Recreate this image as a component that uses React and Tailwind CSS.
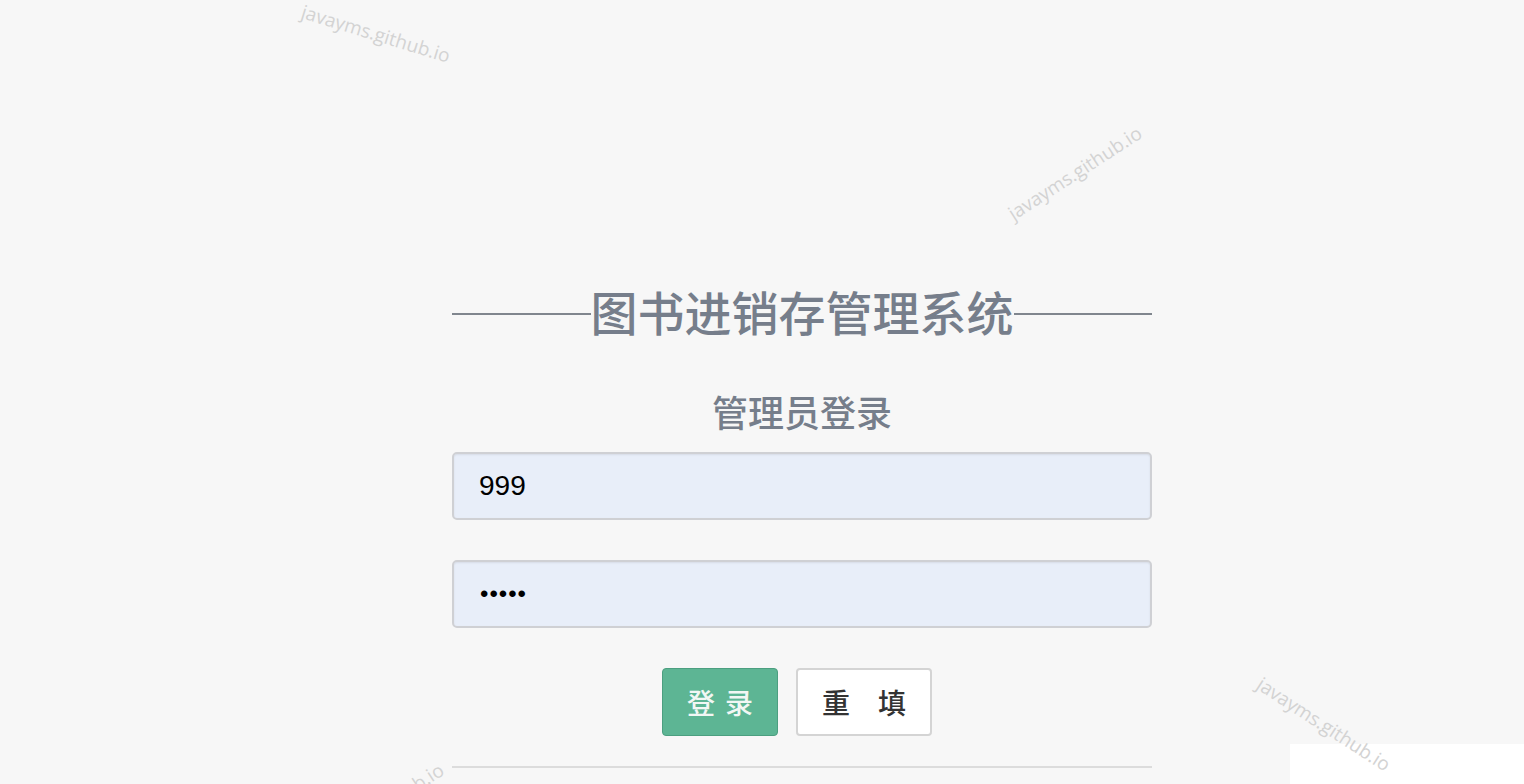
import React from "react";

const cjk = { fontFamily: '"Noto Sans CJK SC", "Noto Sans", sans-serif' };

function Watermark({ className }) {
  return (
    <div
      className={"absolute whitespace-nowrap text-[19px] leading-[18px] text-[#d3d3d3] select-none pointer-events-none " + className}
      style={{ fontFamily: '"Open Sans", "Noto Sans", sans-serif' }}
    >
      javayms.github.io
    </div>
  );
}

export default function App() {
  return (
    <div className="relative min-h-screen h-[784px] overflow-hidden bg-[#f7f7f7]" style={cjk}>
      <div className="ml-[452px] flex w-[700px] flex-col pt-[281px]">
        <div className="flex h-[60px] items-center">
          <div className="mt-[6px] h-[2px] flex-1 bg-[#80868e]" />
          <h1 className="text-[47px] font-medium leading-[60px] text-[#767e8b]">图书进销存管理系统</h1>
          <div className="mt-[6px] h-[2px] flex-1 bg-[#80868e]" />
        </div>
        <h2 className="mt-[48px] text-center text-[36px] font-medium leading-[44px] text-[#767e8b]">管理员登录</h2>
        <input
          readOnly
          value="999"
          className="mt-[19px] h-[68px] w-full rounded-[5px] border-2 border-[#cfd0d4] bg-[#e8eef9] pl-[25px] text-[28px] text-black shadow-[inset_0_1px_2px_rgba(0,0,0,0.08)] outline-none"
          style={{ fontFamily: '"Liberation Sans", Arial, sans-serif' }}
        />
        <input
          readOnly
          type="password"
          value="12345"
          className="mt-[40px] h-[68px] w-full rounded-[5px] border-2 border-[#cfd0d4] bg-[#e8eef9] pl-[26px] text-[24px] tracking-[1px] text-black shadow-[inset_0_1px_2px_rgba(0,0,0,0.08)] outline-none"
          style={{ fontFamily: '"Liberation Sans", Arial, sans-serif' }}
        />
        <div className="mt-[40px] flex justify-center gap-[18px] pr-[10px]">
          <button className="flex h-[68px] w-[116px] items-center justify-center gap-[10px] rounded-[4px] border border-[#4c9f80] bg-[#5db594] text-[28px] font-medium text-[#f2f7f4]">
            <span>登</span>
            <span>录</span>
          </button>
          <button className="flex h-[68px] w-[136px] items-center justify-center gap-[28px] rounded-[4px] border-2 border-[#d4d4d4] bg-white text-[28px] font-medium text-[#333333]">
            <span>重</span>
            <span>填</span>
          </button>
        </div>
        <div className="mt-[30px] h-[2px] w-full bg-[#dcdcdc]" />
      </div>

      <div className="absolute bottom-0 right-0 h-[40px] w-[234px] bg-white" />

      <Watermark className="left-[302px] top-[2px] origin-left rotate-[17deg]" />
      <Watermark className="left-[1010px] top-[206px] origin-left -rotate-[33deg]" />
      <Watermark className="left-[1259px] top-[673px] origin-left rotate-[33deg]" />
      <Watermark className="left-[312px] top-[843px] origin-left -rotate-[33deg]" />
    </div>
  );
}
